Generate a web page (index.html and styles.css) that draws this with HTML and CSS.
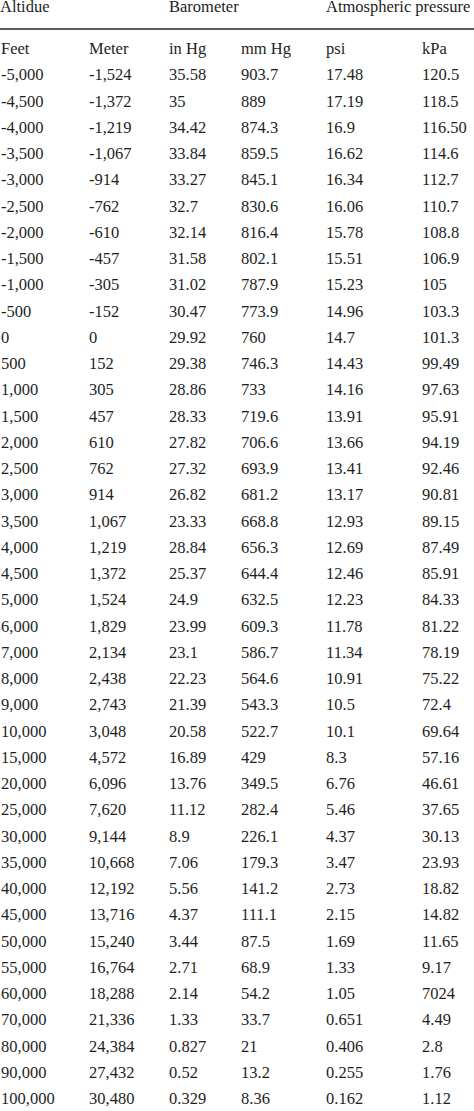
FILE: index.html
```html
<!DOCTYPE html>
<html>
<head>
<meta charset="utf-8">
<link rel="stylesheet" href="styles.css">
</head>
<body>
<div class="table">
  <div class="row head">
    <span class="c1">Altidue</span>
    <span class="c3">Barometer</span>
    <span class="c5">Atmospheric pressure</span>
  </div>
  <div class="body">
    <div class="row"><span>Feet</span><span>Meter</span><span>in Hg</span><span>mm Hg</span><span>psi</span><span>kPa</span></div>
    <div class="row"><span>-5,000</span><span>-1,524</span><span>35.58</span><span>903.7</span><span>17.48</span><span>120.5</span></div>
    <div class="row"><span>-4,500</span><span>-1,372</span><span>35</span><span>889</span><span>17.19</span><span>118.5</span></div>
    <div class="row"><span>-4,000</span><span>-1,219</span><span>34.42</span><span>874.3</span><span>16.9</span><span>116.50</span></div>
    <div class="row"><span>-3,500</span><span>-1,067</span><span>33.84</span><span>859.5</span><span>16.62</span><span>114.6</span></div>
    <div class="row"><span>-3,000</span><span>-914</span><span>33.27</span><span>845.1</span><span>16.34</span><span>112.7</span></div>
    <div class="row"><span>-2,500</span><span>-762</span><span>32.7</span><span>830.6</span><span>16.06</span><span>110.7</span></div>
    <div class="row"><span>-2,000</span><span>-610</span><span>32.14</span><span>816.4</span><span>15.78</span><span>108.8</span></div>
    <div class="row"><span>-1,500</span><span>-457</span><span>31.58</span><span>802.1</span><span>15.51</span><span>106.9</span></div>
    <div class="row"><span>-1,000</span><span>-305</span><span>31.02</span><span>787.9</span><span>15.23</span><span>105</span></div>
    <div class="row"><span>-500</span><span>-152</span><span>30.47</span><span>773.9</span><span>14.96</span><span>103.3</span></div>
    <div class="row"><span>0</span><span>0</span><span>29.92</span><span>760</span><span>14.7</span><span>101.3</span></div>
    <div class="row"><span>500</span><span>152</span><span>29.38</span><span>746.3</span><span>14.43</span><span>99.49</span></div>
    <div class="row"><span>1,000</span><span>305</span><span>28.86</span><span>733</span><span>14.16</span><span>97.63</span></div>
    <div class="row"><span>1,500</span><span>457</span><span>28.33</span><span>719.6</span><span>13.91</span><span>95.91</span></div>
    <div class="row"><span>2,000</span><span>610</span><span>27.82</span><span>706.6</span><span>13.66</span><span>94.19</span></div>
    <div class="row"><span>2,500</span><span>762</span><span>27.32</span><span>693.9</span><span>13.41</span><span>92.46</span></div>
    <div class="row"><span>3,000</span><span>914</span><span>26.82</span><span>681.2</span><span>13.17</span><span>90.81</span></div>
    <div class="row"><span>3,500</span><span>1,067</span><span>23.33</span><span>668.8</span><span>12.93</span><span>89.15</span></div>
    <div class="row"><span>4,000</span><span>1,219</span><span>28.84</span><span>656.3</span><span>12.69</span><span>87.49</span></div>
    <div class="row"><span>4,500</span><span>1,372</span><span>25.37</span><span>644.4</span><span>12.46</span><span>85.91</span></div>
    <div class="row"><span>5,000</span><span>1,524</span><span>24.9</span><span>632.5</span><span>12.23</span><span>84.33</span></div>
    <div class="row"><span>6,000</span><span>1,829</span><span>23.99</span><span>609.3</span><span>11.78</span><span>81.22</span></div>
    <div class="row"><span>7,000</span><span>2,134</span><span>23.1</span><span>586.7</span><span>11.34</span><span>78.19</span></div>
    <div class="row"><span>8,000</span><span>2,438</span><span>22.23</span><span>564.6</span><span>10.91</span><span>75.22</span></div>
    <div class="row"><span>9,000</span><span>2,743</span><span>21.39</span><span>543.3</span><span>10.5</span><span>72.4</span></div>
    <div class="row"><span>10,000</span><span>3,048</span><span>20.58</span><span>522.7</span><span>10.1</span><span>69.64</span></div>
    <div class="row"><span>15,000</span><span>4,572</span><span>16.89</span><span>429</span><span>8.3</span><span>57.16</span></div>
    <div class="row"><span>20,000</span><span>6,096</span><span>13.76</span><span>349.5</span><span>6.76</span><span>46.61</span></div>
    <div class="row"><span>25,000</span><span>7,620</span><span>11.12</span><span>282.4</span><span>5.46</span><span>37.65</span></div>
    <div class="row"><span>30,000</span><span>9,144</span><span>8.9</span><span>226.1</span><span>4.37</span><span>30.13</span></div>
    <div class="row"><span>35,000</span><span>10,668</span><span>7.06</span><span>179.3</span><span>3.47</span><span>23.93</span></div>
    <div class="row"><span>40,000</span><span>12,192</span><span>5.56</span><span>141.2</span><span>2.73</span><span>18.82</span></div>
    <div class="row"><span>45,000</span><span>13,716</span><span>4.37</span><span>111.1</span><span>2.15</span><span>14.82</span></div>
    <div class="row"><span>50,000</span><span>15,240</span><span>3.44</span><span>87.5</span><span>1.69</span><span>11.65</span></div>
    <div class="row"><span>55,000</span><span>16,764</span><span>2.71</span><span>68.9</span><span>1.33</span><span>9.17</span></div>
    <div class="row"><span>60,000</span><span>18,288</span><span>2.14</span><span>54.2</span><span>1.05</span><span>7024</span></div>
    <div class="row"><span>70,000</span><span>21,336</span><span>1.33</span><span>33.7</span><span>0.651</span><span>4.49</span></div>
    <div class="row"><span>80,000</span><span>24,384</span><span>0.827</span><span>21</span><span>0.406</span><span>2.8</span></div>
    <div class="row"><span>90,000</span><span>27,432</span><span>0.52</span><span>13.2</span><span>0.255</span><span>1.76</span></div>
    <div class="row"><span>100,000</span><span>30,480</span><span>0.329</span><span>8.36</span><span>0.162</span><span>1.12</span></div>
  </div>
</div>
</body>
</html>
```
FILE: styles.css
```css
html, body {
  margin: 0;
  padding: 0;
  background: #ffffff;
  overflow: hidden;
}
body {
  width: 474px;
  height: 1111px;
  font-family: "Liberation Serif", "Times New Roman", serif;
  font-size: 16.5px;
  color: #1e1e1e;
}
.table {
  width: 474px;
}
.row {
  display: grid;
  grid-template-columns: 88px 80px 72px 85px 96px 1fr;
  padding-left: 1px;
  line-height: 26.25px;
  white-space: nowrap;
}
.head {
  line-height: 13px;
  padding-bottom: 15px;
  border-bottom: 2px solid #5a5a5a;
}
.head .c1 { grid-column: 1 / 3; margin-left: -1px; }
.head .c3 { grid-column: 3 / 5; }
.head .c5 { grid-column: 5 / 7; }
.body {
  padding-top: 6px;
}
```
